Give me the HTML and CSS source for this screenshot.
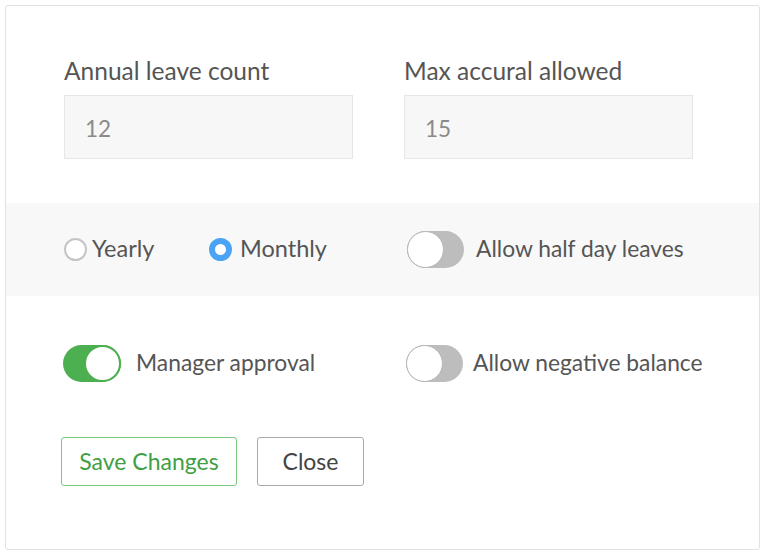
FILE: index.html
```html
<!DOCTYPE html>
<html>
<head>
<meta charset="utf-8">
<link rel="stylesheet" href="styles.css">
</head>
<body>
<div class="card">
  <div class="fields">
    <div class="field">
      <div class="label">Annual leave count</div>
      <div class="input">12</div>
    </div>
    <div class="field">
      <div class="label">Max accural allowed</div>
      <div class="input">15</div>
    </div>
  </div>
  <div class="band">
    <div class="col radios">
      <div class="radio"><span class="dot"></span><span class="txt">Yearly</span></div>
      <div class="radio on"><span class="dot"></span><span class="txt">Monthly</span></div>
    </div>
    <div class="col">
      <div class="switch"><span class="toggle"><span class="knob"></span></span><span class="stxt">Allow half day leaves</span></div>
    </div>
  </div>
  <div class="row2">
    <div class="col">
      <div class="switch"><span class="toggle green"><span class="knob"></span></span><span class="stxt wide">Manager approval</span></div>
    </div>
    <div class="col">
      <div class="switch"><span class="toggle"><span class="knob"></span></span><span class="stxt narrow">Allow negative balance</span></div>
    </div>
  </div>
  <div class="buttons">
    <button class="btn save">Save Changes</button>
    <button class="btn close">Close</button>
  </div>
</div>
</body>
</html>
```
FILE: styles.css
```css
html, body { margin: 0; padding: 0; background: #ffffff; }
body {
  padding: 5px;
  font-family: Lato, "Open Sans", sans-serif;
  color: #555555;
}
.card {
  box-sizing: border-box;
  width: 755px;
  height: 545px;
  border: 1px solid #e2e2e2;
  border-radius: 3px;
  background: #fff;
}
.fields {
  display: flex;
  padding: 51px 0 0 58px;
  height: 146px;
}
.field { width: 340px; }
.label {
  font-size: 24.5px;
  line-height: 28px;
  color: #555;
}
.input {
  box-sizing: border-box;
  margin-top: 10px;
  width: 289px;
  height: 64px;
  background: #f7f7f7;
  border: 1px solid #e6e6e6;
  padding: 3px 0 0 20px;
  font-size: 22.5px;
  line-height: 59px;
  color: #8a8a8a;
}
.band {
  display: flex;
  align-items: center;
  height: 93px;
  background: #f8f8f8;
  padding-left: 58px;
}
.col { width: 343px; display: flex; align-items: center; }
.radio { display: flex; align-items: center; width: 145px; }
.dot {
  box-sizing: border-box;
  width: 23px;
  height: 23px;
  border-radius: 50%;
  border: 2px solid #c4c4c4;
  background: #fff;
}
.radio.on .dot {
  border: 6.5px solid #4aa3f5;
}
.txt {
  margin-left: 5px;
  font-size: 23.5px;
  line-height: 26px;
  color: #555;
  margin-top: -3px;
}
.radio.on .txt { margin-left: 8px; }
.switch { display: flex; align-items: center; }
.toggle {
  position: relative;
  box-sizing: border-box;
  width: 57px;
  height: 37px;
  border-radius: 19px;
  background: #bdbdbd;
}
.knob {
  position: absolute;
  top: 0;
  left: 0;
  box-sizing: border-box;
  width: 37px;
  height: 37px;
  border-radius: 50%;
  background: #fff;
  border: 1px solid #b5b5b5;
}
.toggle.green { background: #4caf50; width: 58px; }
.toggle.green .knob { left: 21px; border: 2px solid #4caf50; }
.stxt {
  margin-left: 12px;
  margin-top: -3px;
  font-size: 22.8px;
  line-height: 26px;
  color: #555;
}
.stxt.wide { margin-left: 15px; }
.stxt.narrow { margin-left: 10px; }
.row2 {
  display: flex;
  align-items: center;
  margin-top: 49px;
  height: 37px;
  padding-left: 57px;
}
.buttons {
  display: flex;
  gap: 20px;
  margin-top: 55px;
  padding-left: 55px;
}
.btn {
  box-sizing: border-box;
  height: 49px;
  font-family: Lato, "Open Sans", sans-serif;
  font-size: 23px;
  background: #fff;
  border-radius: 3px;
  padding: 0 0 2px 0;
  cursor: pointer;
}
.save {
  width: 176px;
  border: 1px solid #7cc87f;
  color: #3f9f43;
}
.close {
  width: 107px;
  border: 1px solid #aaaaaa;
  color: #444;
}
```
